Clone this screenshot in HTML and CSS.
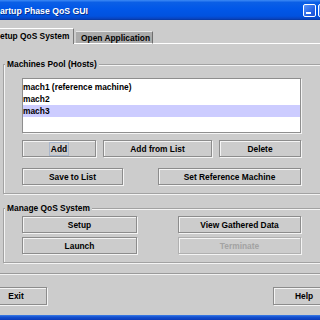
FILE: index.html
```html
<!DOCTYPE html>
<html>
<head>
<meta charset="utf-8">
<link rel="stylesheet" href="styles.css">
</head>
<body>
<div class="titlebar">
  <span class="title">artup Phase QoS GUI</span>
  <div class="caption">
    <span class="cap-btn cap-min"><span class="min-bar"></span></span>
    <span class="cap-btn cap-max"><span class="max-box"></span></span>
  </div>
</div>
<div class="tabs">
  <div class="tab tab-active">etup QoS System</div>
  <div class="tab tab-inactive">Open Application</div>
</div>
<div class="panel">
  <div class="group group-pool">
    <div class="group-title">Machines Pool (Hosts)</div>
    <div class="list">
      <div class="item">mach1 (reference machine)</div>
      <div class="item">mach2</div>
      <div class="item item-selected">mach3</div>
    </div>
    <div class="row row-1">
      <button class="btn w-add"><span class="focus">Add</span></button>
      <button class="btn w-addlist">Add from List</button>
      <button class="btn w-delete">Delete</button>
    </div>
    <div class="row row-2">
      <button class="btn w-save">Save to List</button>
      <button class="btn w-setref">Set Reference Machine</button>
    </div>
  </div>
  <div class="group group-manage">
    <div class="group-title">Manage QoS System</div>
    <div class="row row-m1">
      <button class="btn w-setup">Setup</button>
      <button class="btn w-view">View Gathered Data</button>
    </div>
    <div class="row row-m2">
      <button class="btn w-setup">Launch</button>
      <button class="btn w-view btn-disabled">Terminate</button>
    </div>
  </div>
</div>
<div class="footer">
  <button class="btn btn-exit">Exit</button>
  <button class="btn btn-help">Help</button>
</div>
<div class="frame-bottom"></div>
</body>
</html>
```
FILE: styles.css
```css
html, body {
  margin: 0;
  padding: 0;
}
body {
  width: 320px;
  height: 320px;
  overflow: hidden;
  background: #cccccc;
  font-family: "Liberation Sans", Arial, sans-serif;
  font-weight: bold;
  font-size: 8.4px;
  color: #000;
  display: flex;
  flex-direction: column;
}

/* title bar */
.titlebar {
  height: 20px;
  flex: none;
  display: flex;
  align-items: center;
  justify-content: space-between;
  background: linear-gradient(#3d8af5 0, #0b5fe6 12%, #0157e8 45%, #0152df 80%, #0845c4 92%, #07379f 100%);
}
.title {
  color: #fff;
  font-size: 8.7px;
  padding-left: 0;
  margin-top: 1px;
  text-shadow: 1px 1px 0 #0a2f8c;
}
.caption {
  display: flex;
  gap: 2px;
  margin-right: -11px;
}
.cap-btn {
  width: 13px;
  height: 13px;
  box-sizing: border-box;
  border: 1px solid #fff;
  border-radius: 2px;
  background: linear-gradient(135deg, #5c95f7, #2563e6 60%, #1d52d4);
  display: flex;
}
.min-bar {
  width: 5px;
  height: 2px;
  background: #fff;
  margin: 7px 0 0 2px;
}
.max-box {
  width: 7px;
  height: 6px;
  box-sizing: border-box;
  border: 1px solid #fff;
  border-top-width: 2px;
  margin: 2px 0 0 2px;
}

/* tabs */
.tabs {
  height: 24px;
  flex: none;
  display: flex;
  align-items: flex-end;
  background: linear-gradient(#fff, #fff) no-repeat 0 100% / 100% 1px;
}
.tab {
  box-sizing: border-box;
  display: flex;
  align-items: center;
}
.tab-active {
  width: 74px;
  height: 16px;
  background: #cccccc;
  border-top: 1px solid #fff;
  border-right: 1px solid #7a7a7a;
  padding-bottom: 1px;
}
.tab-inactive {
  width: 77px;
  height: 13px;
  margin-left: 2px;
  padding-left: 5px;
  background: #ababab;
  border-top: 1px solid #e6e6e6;
  border-right: 1px solid #6e6e6e;
  border-bottom: 1px solid #fff;
}

/* panel */
.panel {
  height: 230px;
  flex: none;
  box-sizing: border-box;
  padding: 20px 0 0 3px;
  border-bottom: 1px solid #9a9a9a;
  box-shadow: 0 1px 0 #f2f2f2;
}
.group {
  width: 340px;
  box-sizing: border-box;
  border: 1px solid #a2a2a2;
  box-shadow: inset 1px 1px 0 #f4f4f4, 1px 1px 0 #f4f4f4;
  padding: 0 0 8px 18px;
}
.group-title {
  display: block;
  width: max-content;
  height: 12px;
  line-height: 12px;
  margin: -7px 0 0 -17px;
  padding: 0 2px 0 2px;
  background: #cccccc;
}
.group-manage {
  margin-top: 14px;
}

/* list */
.list {
  width: 279px;
  height: 55px;
  box-sizing: border-box;
  margin-top: 8px;
  padding-top: 2px;
  background: #fff;
  border: 1px solid #8e8e8e;
  box-shadow: 1px 1px 0 #f4f4f4;
}
.item {
  height: 12px;
  line-height: 12px;
  padding-left: 0;
}
.item-selected {
  background: #ccccff;
}

/* rows of buttons */
.row {
  width: 279px;
  display: flex;
  justify-content: space-between;
}
.row-1 { margin-top: 7px; }
.row-2 { margin-top: 11px; }
.row-m1 { margin-top: 2px; }
.row-m2 { margin-top: 4px; }

.btn {
  font: inherit;
  color: #000;
  height: 17px;
  box-sizing: border-box;
  margin: 0;
  padding: 0;
  background: #cccccc;
  border: 1px solid #8c8c8c;
  box-shadow: inset 1px 1px 0 #f4f4f4, 1px 1px 0 #f4f4f4;
  display: flex;
  align-items: center;
  justify-content: center;
}
.focus {
  outline: 1px solid #a8b6cc;
  padding: 1px 1px;
  line-height: 10px;
}
.w-add { width: 74px; }
.w-addlist { width: 109px; }
.w-delete { width: 82px; }
.w-save { width: 101px; }
.w-setref { width: 143px; }
.w-setup { width: 115px; }
.w-view { width: 123px; }
.btn-disabled {
  color: #a3a3a3;
  border-color: #b0b0b0;
}

/* footer */
.footer {
  flex: none;
  margin-top: 13px;
  display: flex;
  justify-content: space-between;
}
.btn-exit {
  width: 62px;
  height: 18px;
  margin-left: -15px;
}
.btn-help {
  width: 62px;
  height: 18px;
  margin-right: -15px;
}
.frame-bottom {
  margin-top: auto;
  height: 5px;
  flex: none;
  background: linear-gradient(#3d7ee6 0, #1350d0 40%, #0a3bb8 100%);
}
```
